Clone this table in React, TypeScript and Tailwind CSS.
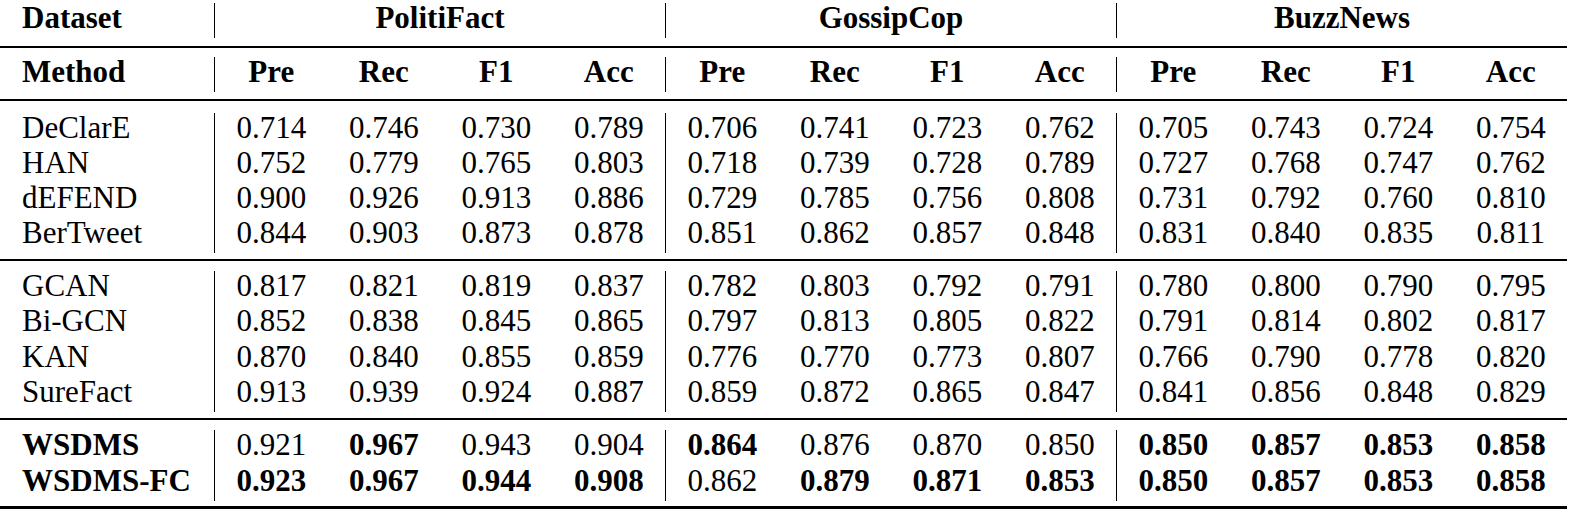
import React from "react";

type Cell = [string, boolean];
type Row = { name: string; bold?: boolean; vals: Cell[] };

const n = (s: string): Cell => [s, false];
const b = (s: string): Cell => [s, true];

const block1: Row[] = [
  { name: "DeClarE", vals: ["0.714","0.746","0.730","0.789","0.706","0.741","0.723","0.762","0.705","0.743","0.724","0.754"].map(n) },
  { name: "HAN", vals: ["0.752","0.779","0.765","0.803","0.718","0.739","0.728","0.789","0.727","0.768","0.747","0.762"].map(n) },
  { name: "dEFEND", vals: ["0.900","0.926","0.913","0.886","0.729","0.785","0.756","0.808","0.731","0.792","0.760","0.810"].map(n) },
  { name: "BerTweet", vals: ["0.844","0.903","0.873","0.878","0.851","0.862","0.857","0.848","0.831","0.840","0.835","0.811"].map(n) },
];
const block2: Row[] = [
  { name: "GCAN", vals: ["0.817","0.821","0.819","0.837","0.782","0.803","0.792","0.791","0.780","0.800","0.790","0.795"].map(n) },
  { name: "Bi-GCN", vals: ["0.852","0.838","0.845","0.865","0.797","0.813","0.805","0.822","0.791","0.814","0.802","0.817"].map(n) },
  { name: "KAN", vals: ["0.870","0.840","0.855","0.859","0.776","0.770","0.773","0.807","0.766","0.790","0.778","0.820"].map(n) },
  { name: "SureFact", vals: ["0.913","0.939","0.924","0.887","0.859","0.872","0.865","0.847","0.841","0.856","0.848","0.829"].map(n) },
];
const block3: Row[] = [
  { name: "WSDMS", bold: true, vals: [n("0.921"), b("0.967"), n("0.943"), n("0.904"), b("0.864"), n("0.876"), n("0.870"), n("0.850"), b("0.850"), b("0.857"), b("0.853"), b("0.858")] },
  { name: "WSDMS-FC", bold: true, vals: [b("0.923"), b("0.967"), b("0.944"), b("0.908"), n("0.862"), b("0.879"), b("0.871"), b("0.853"), b("0.850"), b("0.857"), b("0.853"), b("0.858")] },
];

function DataRow({ row, h }: { row: Row; h: string }) {
  return (
    <div className={`flex ${h}`}>
      <div className={`w-[214px] pl-[22px] leading-[29px] ${row.bold ? "font-bold" : ""}`}>{row.name}</div>
      {[0, 1, 2].map((g) => (
        <div key={g} className="flex w-[451px] border-l border-black">
          {row.vals.slice(g * 4, g * 4 + 4).map(([v, bold], i) => (
            <div key={i} className={`flex-1 text-center leading-[29px] ${bold ? "font-bold" : ""}`}>{v}</div>
          ))}
        </div>
      ))}
    </div>
  );
}

function Rule({ cls }: { cls: string }) {
  return <div className={`w-[1567px] bg-black ${cls}`} />;
}

export default function App() {
  const metrics = ["Pre", "Rec", "F1", "Acc"];
  return (
    <div className="w-[1571px] h-[512px] bg-white text-black text-[31px] font-['Liberation_Serif','Times_New_Roman',serif] pt-[3px]">
      <div className="flex h-[35px] font-bold">
        <div className="w-[214px] pl-[22px] leading-[29px]">Dataset</div>
        {["PolitiFact", "GossipCop", "BuzzNews"].map((d) => (
          <div key={d} className="w-[451px] border-l border-black text-center leading-[29px]">{d}</div>
        ))}
      </div>
      <Rule cls="h-[2px] mt-[8px]" />
      <div className="flex h-[35px] font-bold mt-[9px]">
        <div className="w-[214px] pl-[22px] leading-[29px]">Method</div>
        {[0, 1, 2].map((g) => (
          <div key={g} className="flex w-[451px] border-l border-black">
            {metrics.map((m) => (
              <div key={m} className="flex-1 text-center leading-[29px]">{m}</div>
            ))}
          </div>
        ))}
      </div>
      <Rule cls="h-[2px] mt-[7px]" />
      <div className="mt-[12px]">
        {block1.map((r) => <DataRow key={r.name} row={r} h="h-[35px]" />)}
      </div>
      <Rule cls="h-[2px] mt-[6px]" />
      <div className="mt-[10px]">
        {block2.map((r) => <DataRow key={r.name} row={r} h="h-[35.25px]" />)}
      </div>
      <Rule cls="h-[2px] mt-[6px]" />
      <div className="mt-[10px]">
        {block3.map((r) => <DataRow key={r.name} row={r} h="h-[35.5px]" />)}
      </div>
      <Rule cls="h-[3px] mt-[5px]" />
    </div>
  );
}
